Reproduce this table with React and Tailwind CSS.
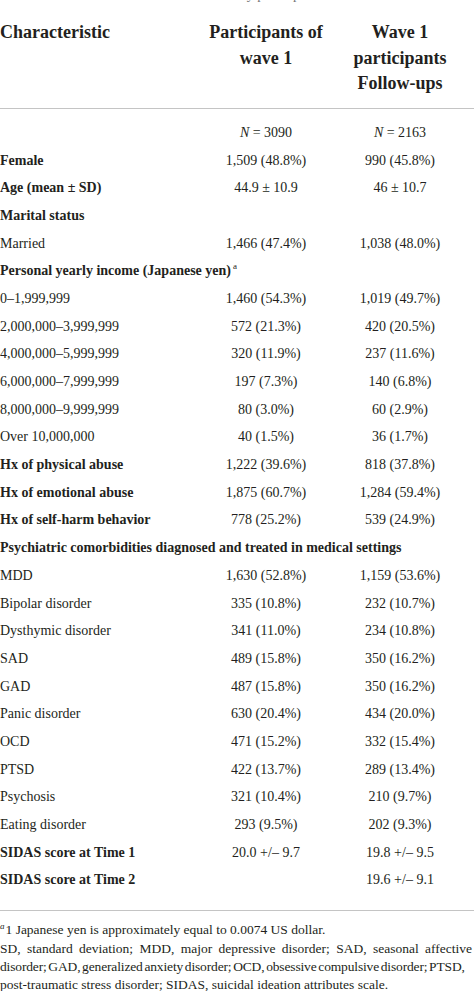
import React from "react";

const rows = [
  { label: "Female", bold: true, a: "1,509 (48.8%)", b: "990 (45.8%)" },
  { label: "Age (mean ± SD)", bold: true, a: "44.9 ± 10.9", b: "46 ± 10.7" },
  { label: "Marital status", bold: true },
  { label: "Married", a: "1,466 (47.4%)", b: "1,038 (48.0%)" },
  { label: "Personal yearly income (Japanese yen)", bold: true, sup: "a", span: true },
  { label: "0–1,999,999", a: "1,460 (54.3%)", b: "1,019 (49.7%)" },
  { label: "2,000,000–3,999,999", a: "572 (21.3%)", b: "420 (20.5%)" },
  { label: "4,000,000–5,999,999", a: "320 (11.9%)", b: "237 (11.6%)" },
  { label: "6,000,000–7,999,999", a: "197 (7.3%)", b: "140 (6.8%)" },
  { label: "8,000,000–9,999,999", a: "80 (3.0%)", b: "60 (2.9%)" },
  { label: "Over 10,000,000", a: "40 (1.5%)", b: "36 (1.7%)" },
  { label: "Hx of physical abuse", bold: true, a: "1,222 (39.6%)", b: "818 (37.8%)" },
  { label: "Hx of emotional abuse", bold: true, a: "1,875 (60.7%)", b: "1,284 (59.4%)" },
  { label: "Hx of self-harm behavior", bold: true, a: "778 (25.2%)", b: "539 (24.9%)" },
  { label: "Psychiatric comorbidities diagnosed and treated in medical settings", bold: true, span: true },
  { label: "MDD", a: "1,630 (52.8%)", b: "1,159 (53.6%)" },
  { label: "Bipolar disorder", a: "335 (10.8%)", b: "232 (10.7%)" },
  { label: "Dysthymic disorder", a: "341 (11.0%)", b: "234 (10.8%)" },
  { label: "SAD", a: "489 (15.8%)", b: "350 (16.2%)" },
  { label: "GAD", a: "487 (15.8%)", b: "350 (16.2%)" },
  { label: "Panic disorder", a: "630 (20.4%)", b: "434 (20.0%)" },
  { label: "OCD", a: "471 (15.2%)", b: "332 (15.4%)" },
  { label: "PTSD", a: "422 (13.7%)", b: "289 (13.4%)" },
  { label: "Psychosis", a: "321 (10.4%)", b: "210 (9.7%)" },
  { label: "Eating disorder", a: "293 (9.5%)", b: "202 (9.3%)" },
  { label: "SIDAS score at Time 1", bold: true, a: "20.0 +/– 9.7", b: "19.8 +/– 9.5" },
  { label: "SIDAS score at Time 2", bold: true, a: "", b: "19.6 +/– 9.1" },
];

function Row({ r }) {
  if (r.span) {
    return (
      <div className="h-[27.7px] flex items-center">
        <span className={r.bold ? "font-bold whitespace-nowrap" : "whitespace-nowrap"}>
          {r.label}
          {r.sup && (
            <span className="font-normal text-[9px] relative -top-[6px] ml-[2px]">{r.sup}</span>
          )}
        </span>
      </div>
    );
  }
  return (
    <div className="grid grid-cols-[199px_134px_134px] h-[27.7px] items-center">
      <div className={r.bold ? "font-bold whitespace-nowrap" : "whitespace-nowrap"}>{r.label}</div>
      <div className="text-center whitespace-nowrap">{r.a}</div>
      <div className="text-center whitespace-nowrap">{r.b}</div>
    </div>
  );
}

export default function App() {
  return (
    <div
      className="w-[474px] h-[991px] overflow-hidden bg-white text-[#231f20]"
      style={{ fontFamily: '"Liberation Serif", "Times New Roman", serif' }}
    >
      <div className="h-[5px] overflow-hidden">
        <div className="-mt-[14px] text-[14px] leading-[18px] text-center text-[#777] pr-[30px]">
          Characteristics of study participants
        </div>
      </div>
      <div className="grid grid-cols-[199px_134px_134px] font-bold text-[18px] leading-[25.5px] pt-[15px]">
        <div>Characteristic</div>
        <div className="text-center">Participants of<br />wave 1</div>
        <div className="text-center">Wave 1<br />participants<br />Follow-ups</div>
      </div>
      <div className="mt-[11px] h-px bg-[#c4c4c4]" />
      <div className="text-[14px] mt-[10px]">
        <div className="grid grid-cols-[199px_134px_134px] h-[27.7px] items-center">
          <div />
          <div className="text-center"><i>N</i> = 3090</div>
          <div className="text-center"><i>N</i> = 2163</div>
        </div>
        {rows.map((r, i) => (
          <Row key={i} r={r} />
        ))}
      </div>
      <div className="mt-[16px] h-px bg-[#c4c4c4]" />
      <div className="mt-[10px] text-[13.5px] leading-[18px] pr-[2px]">
        <div className="whitespace-nowrap">
          <span className="italic text-[9px] relative -top-[5px] mr-[1px]">a</span>1 Japanese yen is approximately equal to 0.0074 US dollar.
        </div>
        <div className="text-justify [text-align-last:justify] whitespace-nowrap">
          SD, standard deviation; MDD, major depressive disorder; SAD, seasonal affective
        </div>
        <div className="whitespace-nowrap tracking-[-0.15px] [word-spacing:-1.5px]">
          disorder; GAD, generalized anxiety disorder; OCD, obsessive compulsive disorder; PTSD,
        </div>
        <div className="whitespace-nowrap">
          post-traumatic stress disorder; SIDAS, suicidal ideation attributes scale.
        </div>
      </div>
    </div>
  );
}
